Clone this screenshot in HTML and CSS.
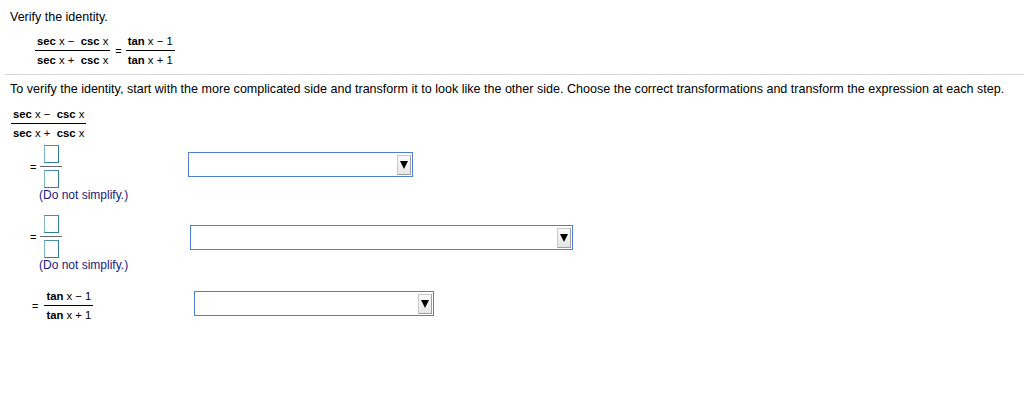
FILE: index.html
```html
<!DOCTYPE html>
<html>
<head>
<meta charset="utf-8">
<link rel="stylesheet" href="styles.css">
</head>
<body>
<div class="page">
  <p class="title">Verify the identity.</p>
  <div class="identity">
    <span class="frac">
      <span class="num"><b>sec</b> x <span class="op">−</span>&nbsp; <b>csc</b> x</span>
      <span class="den"><b>sec</b> x <span class="op">+</span>&nbsp; <b>csc</b> x</span>
    </span>
    <span class="eq">=</span>
    <span class="frac">
      <span class="num"><b>tan</b> x <span class="op">−</span> 1</span>
      <span class="den"><b>tan</b> x <span class="op">+</span> 1</span>
    </span>
  </div>
  <div class="sep"></div>
  <p class="instr">To verify the identity, start with the more complicated side and transform it to look like the other side. Choose the correct transformations and transform the expression at each step.</p>

  <div class="start">
    <span class="frac">
      <span class="num"><b>sec</b> x <span class="op">−</span>&nbsp; <b>csc</b> x</span>
      <span class="den"><b>sec</b> x <span class="op">+</span>&nbsp; <b>csc</b> x</span>
    </span>
  </div>

  <div class="step step1">
    <div class="lhs">
      <div class="expr">
        <span class="eq">=</span>
        <span class="bfrac">
          <span class="box"></span>
          <span class="bline"></span>
          <span class="box"></span>
        </span>
      </div>
      <div class="note">(Do not simplify.)</div>
    </div>
    <div class="select s1"><span class="arrow"></span></div>
  </div>

  <div class="step step2">
    <div class="lhs">
      <div class="expr">
        <span class="eq">=</span>
        <span class="bfrac">
          <span class="box"></span>
          <span class="bline"></span>
          <span class="box"></span>
        </span>
      </div>
      <div class="note">(Do not simplify.)</div>
    </div>
    <div class="select s2"><span class="arrow"></span></div>
  </div>

  <div class="step step3">
    <div class="lhs">
      <div class="expr">
        <span class="eq">=</span>
        <span class="frac">
          <span class="num"><b>tan</b> x <span class="op">−</span> 1</span>
          <span class="den"><b>tan</b> x <span class="op">+</span> 1</span>
        </span>
      </div>
    </div>
    <div class="select s3"><span class="arrow"></span></div>
  </div>
</div>
</body>
</html>
```

FILE: styles.css
```css
html, body {
  margin: 0;
  padding: 0;
  background: #ffffff;
}
body {
  font-family: "Liberation Sans", Arial, sans-serif;
  font-size: 12.5px;
  color: #000;
}
.page {
  padding: 9px 0 0 10px;
}
.title {
  margin: 0;
  line-height: 16px;
}
.identity {
  display: flex;
  align-items: center;
  margin: 10px 0 0 25px;
}
.frac {
  display: inline-flex;
  flex-direction: column;
  align-items: center;
  font-size: 11.3px;
}
.frac b { font-weight: bold; }
.frac .num, .frac .den {
  line-height: 12px;
  padding: 0 2px;
  white-space: nowrap;
}
.frac .num {
  border-bottom: 1px solid #000;
  padding-bottom: 3px;
  align-self: stretch;
  text-align: center;
}
.frac .den {
  padding-top: 3px;
}
.identity .eq {
  margin: 0 4px 0 5px;
  line-height: 12px;
  font-size: 11px;
}
.sep {
  height: 1px;
  background: #d5d5dc;
  margin: 8px 0 0 -5px;
}
.instr {
  margin: 6px 0 0 0;
  line-height: 16px;
  font-size: 12.56px;
  white-space: nowrap;
}
.start {
  margin: 10px 0 0 1px;
}
.step {
  display: flex;
  align-items: flex-start;
}
.lhs {
  display: flex;
  flex-direction: column;
}
.expr {
  display: flex;
  align-items: center;
}
.expr .eq {
  font-size: 11px;
  margin-right: 4px;
}
.bfrac {
  display: inline-flex;
  flex-direction: column;
  align-items: center;
}
.box {
  width: 13px;
  height: 16px;
  border: 1px solid #2e7d96;
  border-left-color: #7fb4c6;
  border-top-color: #4a8ea4;
  box-sizing: content-box;
}
.bline {
  width: 22px;
  height: 1px;
  background: #666;
  margin: 3px 0;
}
.note {
  color: #1a1a80;
  font-size: 12px;
  line-height: 14px;
  margin-top: 0;
  margin-left: 9px;
}
.select {
  position: relative;
  height: 23px;
  border: 1px solid #4f7fd9;
  background: #fff;
}
.arrow {
  position: absolute;
  right: 1px;
  top: 2px;
  width: 12px;
  height: 18px;
  border: 1px solid #c8c8c8;
  border-right-color: #a0a0a0;
  border-bottom-color: #a0a0a0;
  background: linear-gradient(#fafafa, #e6e6e6);
}
.arrow::after {
  content: "";
  position: absolute;
  left: 2px;
  top: 5px;
  border-left: 4px solid transparent;
  border-right: 4px solid transparent;
  border-top: 8px solid #000;
}
.step1 { margin: 6px 0 0 20px; }
.step1 .s1 { width: 223px; margin: 7px 0 0 60px; }
.step2 { margin: 13px 0 0 20px; }
.step2 .s2 { width: 381px; margin: 10px 0 0 62px; }
.step3 { margin: 18px 0 0 22px; }
.step3 .expr .eq { margin-right: 6px; }
.step3 .s3 { width: 238px; margin: 1px 0 0 101px; }
```
